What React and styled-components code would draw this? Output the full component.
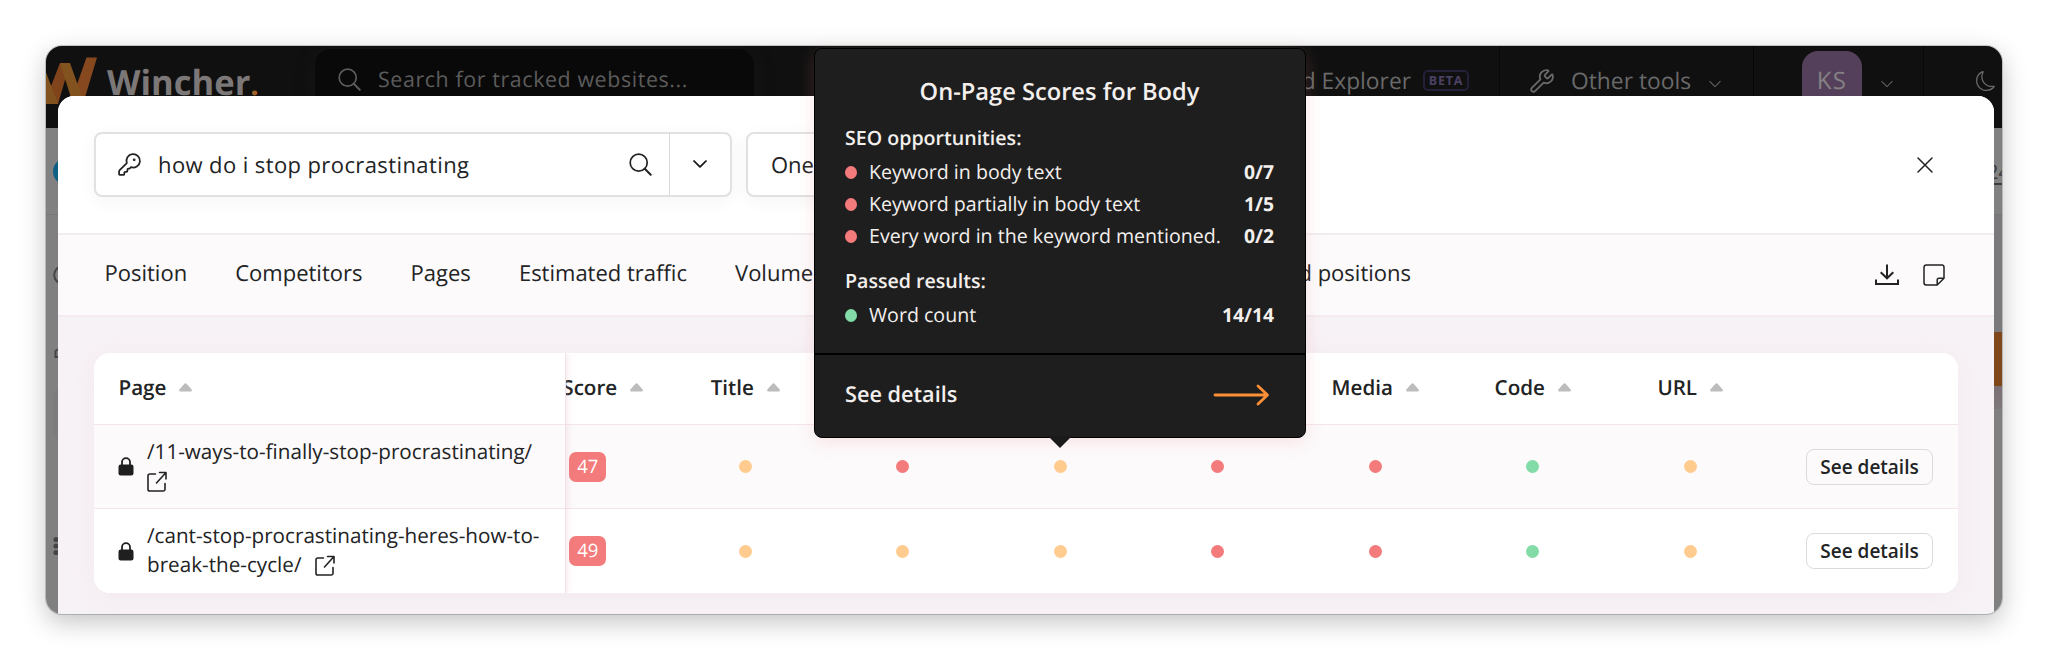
import React from "react";
import styled, { createGlobalStyle, css } from "styled-components";
import { KeyRound, Wrench } from "lucide-react";
import { BsChevronDown, BsMoon } from "react-icons/bs";

const GlobalStyle = createGlobalStyle`
  *, *::before, *::after { box-sizing: border-box; }
  body {
    margin: 0;
    background: #fff;
    color: #222324;
    font-family: "Open Sans", "Noto Sans", sans-serif;
    text-rendering: geometricPrecision;
    overflow: hidden;
  }
  svg { display: block; flex: none; }
`;

const status = { bad: "#f37b7b", ok: "#ffcb8e", good: "#83dba7" };

const Stage = styled.main`
  height: 660px;
  padding: 46px;
`;

const Frame = styled.div`
  position: relative;
  height: 568px;
  border-radius: 16px;
  box-shadow: 0 0 0 1px rgba(0, 20, 20, 0.2), 0 8px 26px rgba(0, 0, 0, 0.24);
`;

const Clip = styled.div`
  position: relative;
  height: 100%;
  border-radius: 16px;
  overflow: hidden;
  background: #808080;
`;

/* ---------- dimmed application behind the dialog ---------- */

const TopBar = styled.header`
  display: flex;
  align-items: center;
  height: 82px;
  padding-bottom: 13px;
  background: #101010;
  color: #696969;
  font-size: 22.8px;
  line-height: 30px;
  white-space: nowrap;
`;

const Brand = styled.div`
  display: flex;
  align-items: center;
  width: 269px;
`;

const BrandName = styled.div`
  margin: 6px 0 0 10px;
  color: #7d7878;
  font-size: 34.6px;
  font-weight: 700;
  line-height: 40px;
  span { color: #a0622a; font-size: 30px; }
`;

const NavSearch = styled.div`
  display: flex;
  align-items: center;
  gap: 17px;
  width: 439px;
  height: 64px;
  padding: 0 0 2px 23px;
  border-radius: 16px;
  background: #090909;
  box-shadow: 0 0 24px rgba(70, 60, 60, 0.12);
  color: #5c5c5c;
  font-size: 21.4px;
  letter-spacing: 0.6px;
`;

const NavSection = styled.div`
  display: flex;
  align-items: center;
  height: 82px;
  margin-bottom: -13px;
  padding: 0 0 13px ${(p) => p.$inset || 0}px;
  width: ${(p) => p.$width}px;
  border-right: ${(p) => (p.$last ? "none" : "1px solid #070707")};
`;

const ExplorerSection = styled(NavSection)`
  flex: 1;
  justify-content: flex-end;
  gap: 12px;
  padding-right: 30px;
`;

const BetaTag = styled.span`
  width: 46px;
  height: 21px;
  border: 2px solid #25203a;
  border-radius: 5px;
  color: #4a4163;
  font-size: 12.5px;
  font-weight: 700;
  letter-spacing: 0.8px;
  line-height: 17px;
  text-align: center;
`;

const NavLabel = styled.span`
  margin: 0 17px 0 16px;
`;

const NavChevron = styled(BsChevronDown)`
  margin-top: 6px;
`;

const Avatar = styled.div`
  width: 60px;
  height: 60px;
  margin-right: 18px;
  border-radius: 16px;
  background: #54405a;
  color: #858085;
  font-size: 24px;
  letter-spacing: 1.2px;
  line-height: 60px;
  text-align: center;
`;

const SiteBar = styled.div`
  display: flex;
  align-items: center;
  justify-content: space-between;
  height: 87px;
  padding-left: 7px;
  border-bottom: 1px solid #777;
  background: #818181;
`;

const SiteDot = styled.div`
  width: 27px;
  height: 27px;
  border-radius: 50%;
  background: #0f5f85;
`;

const SiteDate = styled.div`
  width: 15px;
  overflow: hidden;
  color: #3c3c3c;
  font-size: 20px;
  text-decoration: underline;
  text-underline-offset: 4px;
`;

const Page = styled.div`
  display: flex;
  justify-content: space-between;
  height: 399px;
`;

const Rail = styled.nav`
  display: flex;
  flex-direction: column;
  padding: 50px 0 0 7px;
  color: #454545;
`;

const RailHighlight = styled.div`
  width: 30px;
  height: 56px;
  margin: 27px 0 94px;
  border-radius: 12px;
  background: #7c7c7c;
`;

const SideColumn = styled.div`
  display: flex;
  flex-direction: column;
  width: 20px;
`;

const SideBlock = styled.div`
  height: ${(p) => p.$height}px;
  background: ${(p) => p.$fill};
`;

/* ---------- dialog ---------- */

const Dialog = styled.section`
  position: absolute;
  top: 50px;
  left: 12px;
  right: 8px;
  bottom: 0;
  border-radius: 16px 16px 0 0;
  overflow: hidden;
  background: #f7f2f6;
`;

const DialogHeader = styled.div`
  display: flex;
  align-items: flex-start;
  gap: 14px;
  height: 139px;
  padding: 36px 61px 0 36px;
  border-bottom: 2px solid #f2edf0;
  background: #fff;
`;

const fieldBox = css`
  display: flex;
  height: 65px;
  border: 2px solid #e1e1e1;
  border-radius: 8px;
  background: #fff;
  box-shadow: 0 4px 18px rgba(0, 0, 0, 0.045);
  font-size: 22px;
`;

const KeywordField = styled.div`
  ${fieldBox}
  width: 638px;
`;

const KeywordInput = styled.div`
  display: flex;
  align-items: center;
  flex: 1;
  padding: 0 17px 0 21px;
`;

const KeywordText = styled.span`
  flex: 1;
  margin-left: 16px;
  letter-spacing: 0.4px;
`;

const FieldToggle = styled.button`
  display: flex;
  align-items: center;
  justify-content: center;
  width: 61px;
  padding: 0 0 2px;
  border: 0;
  border-left: 1px solid #d9d9d9;
  background: none;
  color: #111;
`;

const PageSelect = styled.div`
  ${fieldBox}
  align-items: center;
  width: 300px;
  padding-left: 23px;
`;

const CloseButton = styled.button`
  margin: 25px 0 0 auto;
  padding: 0;
  border: 0;
  background: none;
`;

const TabBar = styled.nav`
  display: flex;
  align-items: center;
  height: 82px;
  padding: 0 49px 4px 46.5px;
  border-bottom: 2px solid #f3ebf1;
  background: #fcfafb;
  font-size: 22px;
  white-space: nowrap;
`;

const TabList = styled.div`
  display: flex;
  gap: 48.1px;
  width: 1306.5px;
`;

const Tab = styled.a`
  ${(p) => p.$last && "margin-left: auto;"}
`;

const TabTools = styled.div`
  display: flex;
  gap: 24px;
  margin: 4px 0 0 auto;
`;

const DialogBody = styled.div`
  padding: 36px;
`;

const Table = styled.div`
  display: flex;
  height: 240px;
  border-radius: 16px;
  overflow: hidden;
  background: #fff;
  box-shadow: 0 4px 24px rgba(235, 205, 220, 0.24);
  font-size: 20.6px;
`;

const PinnedColumn = styled.div`
  position: relative;
  width: 472px;
  border-right: 1px solid #f1e2e7;
  box-shadow: 1px 0 6px rgba(220, 170, 185, 0.3);
`;

const ScrollArea = styled.div`
  flex: 1;
  overflow: hidden;
`;

const ScrollContent = styled.div`
  width: 1449px;
  margin-left: -57px;
`;

const Row = styled.div`
  display: flex;
  align-items: center;
  height: ${(p) => (p.$head ? 72 : 84)}px;
  padding-bottom: ${(p) => (p.$head ? 2 : 0)}px;
  border-bottom: ${(p) => (p.$last ? "none" : "1px solid #f3e6ea")};
  background: ${(p) => (p.$tinted ? "#fcfafb" : "#fff")};
  font-weight: ${(p) => (p.$head ? 600 : 400)};
`;

const PageCell = styled(Row)`
  padding-left: ${(p) => (p.$head ? 24.5 : 24)}px;
  padding-right: 20px;
`;

const Cell = styled.div`
  display: flex;
  align-items: center;
  justify-content: center;
  width: 157.5px;
  padding-left: ${(p) => p.$shift || 0}px;
`;

const Caret = styled.span`
  margin: -1px 0 0 13px;
`;

const ActionCell = styled.div`
  display: flex;
  flex: 1;
  justify-content: flex-end;
  padding-right: 25px;
`;

const PageLink = styled.a`
  margin-left: 13px;
  flex: 1;
  font-size: 20.67px;
  line-height: 29px;
  word-spacing: 8px;
  svg { display: inline-block; vertical-align: -4px; }
`;

const ScoreBadge = styled.span`
  width: 37px;
  height: 30px;
  border-radius: 7px;
  background: ${status.bad};
  color: #fff;
  font-size: 18.5px;
  line-height: 30px;
  text-align: center;
`;

const Dot = styled.i`
  flex: none;
  width: ${(p) => p.$size || 13}px;
  height: 13px;
  border-radius: 50%;
  background: ${(p) => status[p.$status]};
`;

const DetailsButton = styled.button`
  width: 127px;
  height: 36px;
  padding: 0;
  border: 1.5px solid #dcdadb;
  border-radius: 8px;
  background: transparent;
  color: inherit;
  font: 600 19px/32px "Open Sans", sans-serif;
`;

/* ---------- score tooltip ---------- */

const Tooltip = styled.aside`
  position: absolute;
  top: 2px;
  left: 768px;
  width: 492px;
  height: 390px;
  border: 1.5px solid #000;
  border-radius: 8px;
  background: #1e1e1e;
  box-shadow: 0 4px 18px rgba(230, 130, 130, 0.2);
  color: #f3efed;
  font-size: 19.6px;
  line-height: 32px;
`;

const TooltipBody = styled.div`
  height: 304px;
  padding: 26px 31px 0 30px;
`;

const TooltipTitle = styled.h2`
  margin: 0 0 15px;
  font-size: 23.67px;
  font-weight: 600;
  line-height: 32px;
  text-align: center;
`;

const TooltipHeading = styled.h3`
  margin: ${(p) => (p.$spaced ? 13 : 0)}px 0 2px;
  font-size: 19.6px;
  font-weight: 600;
`;

const CheckRow = styled.div`
  display: flex;
  align-items: center;
  white-space: nowrap;
  span { flex: 1; margin-left: 12px; }
  b { font-size: 19.3px; }
`;

const TooltipFooter = styled.a`
  display: flex;
  align-items: center;
  justify-content: space-between;
  height: 82px;
  padding: 0 35px 0 30px;
  border-top: 2px solid #000;
  font-size: 21.7px;
  font-weight: 600;
`;

const Pointer = styled.div`
  position: absolute;
  top: 387px;
  left: 233px;
`;

const columns = ["Title", "Headings", "Body", "Links", "Media", "Code", "URL"];

const pages = [
  { path: "/11-ways-to-finally-stop-procrastinating/", score: 47, checks: ["ok", "bad", "ok", "bad", "bad", "good", "ok"] },
  { path: "/cant-stop-procrastinating-heres-how-to-break-the-cycle/", score: 49, checks: ["ok", "ok", "ok", "bad", "bad", "good", "ok"] },
];

const LogoMark = () => (
  <svg width="51" height="50" viewBox="46 55 51 50">
    <path d="M60 62h10L58 103H44z" fill="#80441d" />
    <path d="M86.500 56.500H97L83 103H70z" fill="#86491f" />
    <path d="M34 62h8.500L58 103H46z" fill="#83531f" />
    <path d="M60 62h10l14.500 41H73z" fill="#83531f" />
  </svg>
);

const SearchIcon = () => (
  <svg width="23" height="23" viewBox="0 0 23 23" fill="none" stroke="currentColor" strokeWidth="1.700" strokeLinecap="round">
    <circle cx="9.700" cy="9.700" r="8.500" />
    <path d="M15.800 15.800l5.900 5.900" strokeWidth="2" />
  </svg>
);

const SortCaret = () => (
  <Caret>
    <svg width="13" height="9" viewBox="0 0 13 9">
      <path d="M5.700.6a1.100 1.100 0 0 1 1.600 0l5.200 5.700c.8.900.2 2.200-1 2.200h-10c-1.200 0-1.800-1.300-1-2.200z" fill="#bcbcbc" />
    </svg>
  </Caret>
);

const LockIcon = () => (
  <svg width="16" height="19" viewBox="0 0 16 19">
    <rect x=".5" y="7.500" width="15" height="11" rx="2.200" fill="#1f1f20" />
    <path d="M4 8.500V5.200a4 4 0 0 1 8 0v3.300" fill="none" stroke="#1f1f20" strokeWidth="1.800" />
  </svg>
);

const ExternalIcon = () => (
  <svg width="20" height="21" viewBox="0 0 20 21" fill="none" stroke="#222324" strokeWidth="1.600" strokeLinecap="round" strokeLinejoin="round">
    <path d="M8.500 3H2.800A1.800 1.800 0 0 0 1 4.800v13.400A1.800 1.800 0 0 0 2.800 20h13.400a1.800 1.800 0 0 0 1.800-1.800v-5.700" />
    <path d="M12.500 1.500H19V8M19 1.500 9.500 12" />
  </svg>
);

const DownloadIcon = () => (
  <svg width="24" height="22" viewBox="0 0 24 22" fill="none" stroke="#222324" strokeWidth="2">
    <path d="M1 15.500v4.600h22v-4.600" />
    <path d="M12 .5v13.500M5.700 8.200l6.300 6.100 6.300-6.100" />
  </svg>
);

const NoteIcon = () => (
  <svg width="22" height="22" viewBox="0 0 22 22" fill="none" stroke="#222324" strokeWidth="1.500" strokeLinejoin="round">
    <path d="M3.200 1h15.600A2.200 2.200 0 0 1 21 3.200v11L14.200 21h-11A2.200 2.200 0 0 1 1 18.800V3.200A2.200 2.200 0 0 1 3.200 1z" />
    <path d="M21 14.200h-5a1.800 1.800 0 0 0-1.800 1.800v5" />
  </svg>
);

const CloseIcon = () => (
  <svg width="16" height="16" viewBox="0 0 16 16" stroke="#222" strokeWidth="1.500" strokeLinecap="round">
    <path d="M1 1l14 14M15 1 1 15" />
  </svg>
);

const ArrowIcon = () => (
  <svg width="57" height="22" viewBox="0 0 57 22" fill="none" stroke="#fd8f37" strokeWidth="2.800" strokeLinecap="round" strokeLinejoin="round">
    <path d="M2 11h52M45 2l9.500 9-9.500 9" />
  </svg>
);

const AppBackground = () => (
  <>
    <TopBar>
      <Brand>
        <LogoMark />
        <BrandName>Wincher<span>.</span></BrandName>
      </Brand>
      <NavSearch>
        <SearchIcon />
        Search for tracked websites...
      </NavSearch>
      <ExplorerSection>
        Keyword Explorer
        <BetaTag>BETA</BetaTag>
      </ExplorerSection>
      <NavSection $width={254} $inset={29}>
        <Wrench size={26} strokeWidth={1.7} />
        <NavLabel>Other tools</NavLabel>
        <NavChevron size={14} />
      </NavSection>
      <NavSection $width={170} $inset={48}>
        <Avatar>KS</Avatar>
        <NavChevron size={14} />
      </NavSection>
      <NavSection $width={78} $inset={52} $last>
        <BsMoon size={20} />
      </NavSection>
    </TopBar>
    <SiteBar>
      <SiteDot />
      <SiteDate>24</SiteDate>
    </SiteBar>
    <Page>
      <Rail>
        <svg width="20" height="20" viewBox="0 0 20 20" fill="none" stroke="currentColor" strokeWidth="2">
          <circle cx="10" cy="10" r="8.800" />
        </svg>
        <svg width="20" height="74" viewBox="0 0 20 74" fill="none" stroke="currentColor" strokeWidth="2">
          <path d="M8 62.500 2.500 66v6H8" />
        </svg>
        <RailHighlight />
        <svg width="20" height="20" viewBox="0 0 20 20" fill="currentColor">
          <circle cx="3" cy="3.500" r="2.600" />
          <circle cx="3" cy="10" r="2.600" />
          <circle cx="3" cy="16.500" r="2.600" />
        </svg>
      </Rail>
      <SideColumn>
        <SideBlock $height={117} $fill="#7b797b" />
        <SideBlock $height={54} $fill="#80481a" />
        <SideBlock $height={23} $fill="linear-gradient(#7c7074, #7d7879)" />
      </SideColumn>
    </Page>
  </>
);

const ScoreTable = () => (
  <Table>
    <PinnedColumn>
      <PageCell $head>Page<SortCaret /></PageCell>
      {pages.map((page, i) => (
        <PageCell key={page.path} $tinted={i === 0} $last={i === 1}>
          <LockIcon />
          <PageLink>{page.path} <ExternalIcon /></PageLink>
        </PageCell>
      ))}
    </PinnedColumn>
    <ScrollArea>
      <ScrollContent>
        <Row $head>
          <Cell $shift={30}>Score<SortCaret /></Cell>
          {columns.map((name) => (
            <Cell key={name}>{name}<SortCaret /></Cell>
          ))}
        </Row>
        {pages.map((page, i) => (
          <Row key={page.path} $tinted={i === 0} $last={i === 1}>
            <Cell><ScoreBadge>{page.score}</ScoreBadge></Cell>
            {page.checks.map((value, c) => (
              <Cell key={columns[c]}><Dot $status={value} /></Cell>
            ))}
            <ActionCell><DetailsButton>See details</DetailsButton></ActionCell>
          </Row>
        ))}
      </ScrollContent>
    </ScrollArea>
  </Table>
);

const Check = ({ result, label, score }) => (
  <CheckRow>
    <Dot $status={result} $size={12} />
    <span>{label}</span>
    <b>{score}</b>
  </CheckRow>
);

const ScoreTooltip = () => (
  <Tooltip>
    <TooltipBody>
      <TooltipTitle>On-Page Scores for Body</TooltipTitle>
      <TooltipHeading>SEO opportunities:</TooltipHeading>
      <Check result="bad" label="Keyword in body text" score="0/7" />
      <Check result="bad" label="Keyword partially in body text" score="1/5" />
      <Check result="bad" label="Every word in the keyword mentioned." score="0/2" />
      <TooltipHeading $spaced>Passed results:</TooltipHeading>
      <Check result="good" label="Word count" score="14/14" />
    </TooltipBody>
    <TooltipFooter>
      See details
      <ArrowIcon />
    </TooltipFooter>
    <Pointer>
      <svg width="24" height="13" viewBox="0 0 24 13">
        <path d="M0 0h24L12 12z" fill="#1a1a1a" />
      </svg>
    </Pointer>
  </Tooltip>
);

export default function App() {
  return (
    <Stage>
      <GlobalStyle />
      <Frame>
        <Clip>
          <AppBackground />
          <Dialog>
            <DialogHeader>
              <KeywordField>
                <KeywordInput>
                  <KeyRound size={25} strokeWidth={1.7} />
                  <KeywordText>how do i stop procrastinating</KeywordText>
                  <SearchIcon />
                </KeywordInput>
                <FieldToggle><BsChevronDown size={16} strokeWidth={0.9} /></FieldToggle>
              </KeywordField>
              <PageSelect>One page</PageSelect>
              <CloseButton><CloseIcon /></CloseButton>
            </DialogHeader>
            <TabBar>
              <TabList>
                <Tab>Position</Tab>
                <Tab>Competitors</Tab>
                <Tab>Pages</Tab>
                <Tab>Estimated traffic</Tab>
                <Tab>Volume</Tab>
                <Tab $last>Tracked positions</Tab>
              </TabList>
              <TabTools>
                <DownloadIcon />
                <NoteIcon />
              </TabTools>
            </TabBar>
            <DialogBody>
              <ScoreTable />
            </DialogBody>
          </Dialog>
        </Clip>
        <ScoreTooltip />
      </Frame>
    </Stage>
  );
}
